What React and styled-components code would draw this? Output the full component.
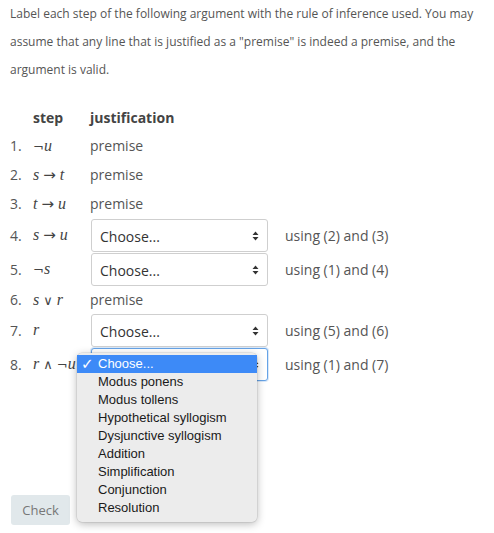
import styled, { createGlobalStyle } from "styled-components";

const Global = createGlobalStyle`
  body {
    margin: 0;
    background: #fff;
    font-family: "Open Sans", "Liberation Sans", sans-serif;
    color: #555;
  }
`;

const Page = styled.div`
  position: relative;
  width: 494px;
  height: 533px;
  padding: 0 10px;
  box-sizing: border-box;
`;

const Intro = styled.p`
  margin: 0;
  font-size: 12px;
  line-height: 28px;
  color: #555;
`;

const Table = styled.div`
  margin-top: 19px;
  display: flex;
  flex-direction: column;
`;

const Row = styled.div`
  display: grid;
  grid-template-columns: 23px 57px 195px auto;
  align-items: center;
  height: ${(p) => p.$h}px;
  font-size: 14px;
`;

const Head = styled.div`
  font-weight: 700;
  color: #444;
  font-size: 14px;
`;

const Num = styled.span`
  color: #555;
`;

const MathCell = styled.span`
  font-family: "Liberation Serif", "DejaVu Serif", serif;
  font-size: 16px;
  color: #444;
  white-space: nowrap;
  & i {
    font-style: italic;
    font-family: "Liberation Serif", serif;
  }
`;

const Op = styled.span`
  font-family: "DejaVu Sans", sans-serif;
  font-size: ${(p) => (p.$small ? 13 : 15)}px;
  padding: 0 ${(p) => (p.$tight ? 0 : 4)}px;
`;

const Select = styled.div`
  box-sizing: border-box;
  width: 177px;
  height: 33px;
  margin-left: 1px;
  border: 1px solid ${(p) => (p.$focus ? "#66a3e6" : "#cfcfcf")};
  border-radius: 3px;
  display: flex;
  align-items: center;
  justify-content: space-between;
  padding: 2px 8px 0 8px;
  color: #333;
  font-size: 14px;
  background: #fff;
  box-shadow: ${(p) => (p.$focus ? "0 0 0 1px rgba(102,163,230,0.25)" : "none")};
`;

const Arrows = () => (
  <svg width="7" height="10" viewBox="0 0 7 10">
    <path d="M3.5 0.5 L6.5 4 H0.5 Z M3.5 9.5 L6.5 6 H0.5 Z" fill="#333" />
  </svg>
);

const Using = styled.span`
  color: #555;
  white-space: nowrap;
`;

const Menu = styled.div`
  position: absolute;
  left: 77px;
  top: 353px;
  width: 180px;
  padding: 2px 0 5px;
  box-sizing: border-box;
  background: #ececec;
  border-radius: 5px;
  box-shadow: 0 2px 8px rgba(0, 0, 0, 0.28), 0 0 0 0.5px rgba(0, 0, 0, 0.12);
  font-family: "Liberation Sans", Arial, sans-serif;
  font-size: 13px;
  z-index: 2;
`;

const Item = styled.div`
  height: 18px;
  line-height: 18px;
  padding-left: 21px;
  position: relative;
  color: ${(p) => (p.$active ? "#fff" : "#1a1a1a")};
  background: ${(p) => (p.$active ? "#3d8af7" : "transparent")};
`;

const Tick = styled.span`
  position: absolute;
  left: 4px;
  top: 0;
  font-family: "DejaVu Sans", sans-serif;
  font-size: 15px;
  font-weight: 700;
`;

const Check = styled.button`
  margin-top: 114px;
  width: 59px;
  height: 30px;
  margin-left: 1px;
  border: none;
  border-radius: 3px;
  background: #e1e8eb;
  color: #777;
  font-family: "Open Sans", "Liberation Sans", sans-serif;
  font-size: 13px;
  padding: 0;
`;

const Not = () => <Op $small $tight>¬</Op>;

const steps = [
  { m: <><Not /><i>u</i></>, j: "premise", h: 29 },
  { m: <><i>s</i><Op>→</Op><i>t</i></>, j: "premise", h: 29 },
  { m: <><i>t</i><Op>→</Op><i>u</i></>, j: "premise", h: 29 },
  { m: <><i>s</i><Op>→</Op><i>u</i></>, using: "using (2) and (3)", h: 34 },
  { m: <><Not /><i>s</i></>, using: "using (1) and (4)", h: 34 },
  { m: <><i>s</i><Op $small>∨</Op><i>r</i></>, j: "premise", h: 27 },
  { m: <><i>r</i></>, using: "using (5) and (6)", h: 34 },
  { m: <><i>r</i><Op $small>∧</Op><Not /><i>u</i></>, using: "using (1) and (7)", focus: true, h: 34 },
];

const options = [
  "Choose...",
  "Modus ponens",
  "Modus tollens",
  "Hypothetical syllogism",
  "Dysjunctive syllogism",
  "Addition",
  "Simplification",
  "Conjunction",
  "Resolution",
];

export default function App() {
  return (
    <Page>
      <Global />
      <Intro>
        Label each step of the following argument with the rule of inference used. You may
        assume that any line that is justified as a "premise" is indeed a premise, and the
        argument is valid.
      </Intro>
      <Table>
        <Row $h={28}>
          <span />
          <Head>step</Head>
          <Head>justification</Head>
          <span />
        </Row>
        {steps.map((s, i) => (
          <Row key={i} $h={s.h}>
            <Num>{i + 1}.</Num>
            <MathCell>{s.m}</MathCell>
            {s.j ? (
              <span>{s.j}</span>
            ) : (
              <Select $focus={s.focus}>
                <span>Choose...</span>
                <Arrows />
              </Select>
            )}
            {s.using ? <Using>{s.using}</Using> : <span />}
          </Row>
        ))}
      </Table>
      <Check>Check</Check>
      <Menu>
        {options.map((o, i) => (
          <Item key={o} $active={i === 0}>
            {i === 0 && <Tick>✓</Tick>}
            {o}
          </Item>
        ))}
      </Menu>
    </Page>
  );
}
